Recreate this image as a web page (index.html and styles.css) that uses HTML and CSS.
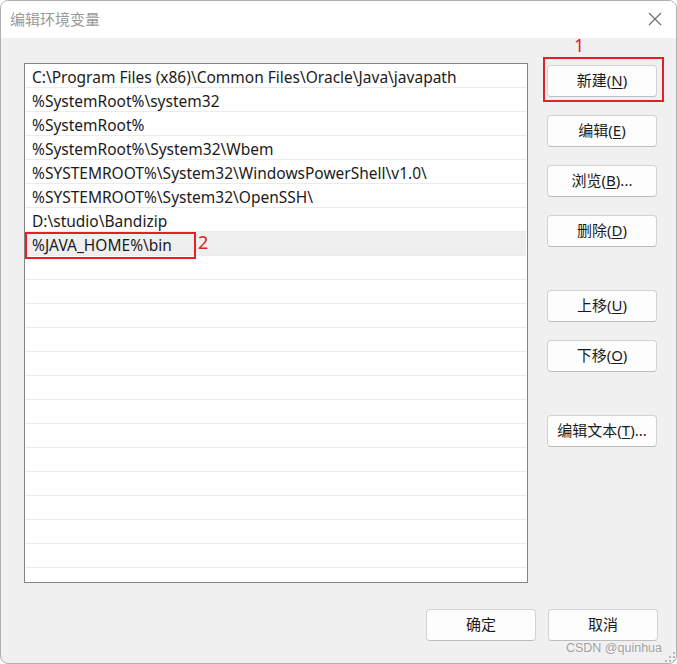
FILE: index.html
```html
<!DOCTYPE html>
<html lang="zh-CN">
<head>
<meta charset="utf-8">
<title>编辑环境变量</title>
<link rel="stylesheet" href="styles.css">
</head>
<body>
<div class="window">
  <div class="titlebar">
    <span class="title">编辑环境变量</span>
    <svg class="close" width="14" height="14" viewBox="0 0 14 14"><path d="M1 1 L13 13 M13 1 L1 13" stroke="#6a6a6a" stroke-width="1.1" fill="none"/></svg>
  </div>
  <div class="content">
    <div class="main">
      <div class="list">
        <div class="row">C:\Program Files (x86)\Common Files\Oracle\Java\javapath</div>
        <div class="row">%SystemRoot%\system32</div>
        <div class="row">%SystemRoot%</div>
        <div class="row">%SystemRoot%\System32\Wbem</div>
        <div class="row">%SYSTEMROOT%\System32\WindowsPowerShell\v1.0\</div>
        <div class="row">%SYSTEMROOT%\System32\OpenSSH\</div>
        <div class="row">D:\studio\Bandizip</div>
        <div class="row selected">%JAVA_HOME%\bin<span class="mark mark-row"></span><span class="num num-row">2</span></div>
        <div class="row"></div>
        <div class="row"></div>
        <div class="row"></div>
        <div class="row"></div>
        <div class="row"></div>
        <div class="row"></div>
        <div class="row"></div>
        <div class="row"></div>
        <div class="row"></div>
        <div class="row"></div>
        <div class="row"></div>
        <div class="row"></div>
        <div class="row"></div>
        <div class="row last"></div>
      </div>
      <div class="side">
        <div class="group">
          <div class="btn-wrap">
            <button class="btn">新建(<u>N</u>)</button>
            <span class="mark mark-btn"></span>
            <span class="num num-btn">1</span>
          </div>
          <button class="btn">编辑(<u>E</u>)</button>
          <button class="btn">浏览(<u>B</u>)...</button>
          <button class="btn">删除(<u>D</u>)</button>
        </div>
        <div class="group">
          <button class="btn">上移(<u>U</u>)</button>
          <button class="btn">下移(<u>O</u>)</button>
        </div>
        <div class="group">
          <button class="btn">编辑文本(<u>T</u>)...</button>
        </div>
      </div>
    </div>
    <div class="footer">
      <button class="btn">确定</button>
      <button class="btn">取消</button>
    </div>
  </div>
  <span class="watermark">CSDN @quinhua</span>
  <svg class="grip" width="10" height="10" viewBox="0 0 10 10">
    <rect x="8" y="0" width="2" height="2" fill="#b8b8b8"/>
    <rect x="4" y="4" width="2" height="2" fill="#b8b8b8"/>
    <rect x="8" y="4" width="2" height="2" fill="#b8b8b8"/>
    <rect x="0" y="8" width="2" height="2" fill="#b8b8b8"/>
    <rect x="4" y="8" width="2" height="2" fill="#b8b8b8"/>
    <rect x="8" y="8" width="2" height="2" fill="#b8b8b8"/>
  </svg>
</div>
</body>
</html>
```
FILE: styles.css
```css
* { box-sizing: border-box; }
html, body {
  margin: 0;
  padding: 0;
  background: #ffffff;
}
body {
  font-family: "Noto Sans", "Noto Sans CJK SC", sans-serif;
  font-size: 14px;
  color: #1b1b1b;
}
.window {
  position: relative;
  width: 677px;
  height: 664px;
  border: 1px solid #b0b0b0;
  border-radius: 8px;
  background: #f0f0f0;
  overflow: hidden;
  display: flex;
  flex-direction: column;
}
.titlebar {
  height: 37px;
  background: #ffffff;
  display: flex;
  align-items: center;
  justify-content: space-between;
  padding: 0 14px 2px 9px;
  flex-shrink: 0;
}
.title {
  font-family: "Noto Sans CJK SC", sans-serif;
  font-size: 15px;
  color: #999999;
  line-height: 1;
}
.close { display: block; }
.content {
  flex: 1;
  padding: 25px 18px 0 23px;
  display: flex;
  flex-direction: column;
}
.main {
  display: flex;
  gap: 19px;
  align-items: flex-start;
}
.list {
  width: 504px;
  height: 520px;
  border: 1px solid #838383;
  background: #ffffff;
  padding: 0 1px;
  overflow: hidden;
}
.row {
  position: relative;
  height: 24px;
  line-height: 26px;
  border-bottom: 1px solid #ebebeb;
  padding-left: 6px;
  white-space: nowrap;
  font-size: 15.5px;
  color: #1b1b1b;
}
.row.selected { background: #efefef; }
.row.last { border-bottom: none; }
.side {
  width: 110px;
  margin-top: 2px;
  display: flex;
  flex-direction: column;
  gap: 43px;
}
.group {
  display: flex;
  flex-direction: column;
  gap: 18px;
}
.btn-wrap { position: relative; }
.btn {
  width: 110px;
  height: 32px;
  background: #fdfdfd;
  border: 1px solid #d2d2d2;
  border-bottom-color: #bdbdbd;
  border-radius: 4px;
  font-family: "Noto Sans", "Noto Sans CJK SC", sans-serif;
  font-size: 15px;
  color: #1b1b1b;
  padding: 0 0 3px 0;
  display: flex;
  align-items: center;
  justify-content: center;
}
.btn u { text-underline-offset: 2px; }
.footer {
  display: flex;
  justify-content: flex-end;
  gap: 12px;
  margin-top: 26px;
}
.mark {
  position: absolute;
  border: 2px solid #e3202a;
  pointer-events: none;
}
.mark-row {
  left: -1px;
  top: 0;
  width: 171px;
  height: 27px;
}
.mark-btn {
  left: -4px;
  top: -8px;
  width: 121px;
  height: 45px;
}
.num {
  position: absolute;
  color: #e3202a;
  font-family: "Noto Sans", sans-serif;
  font-size: 18px;
  line-height: 1;
}
.num-row {
  left: 172px;
  top: 1px;
}
.num-btn {
  left: 27px;
  top: -29px;
}
.watermark {
  position: absolute;
  right: 14px;
  bottom: 8px;
  font-family: "Liberation Sans", sans-serif;
  font-size: 12.5px;
  color: #9f9f9f;
  text-shadow: 0 0 2px #ffffff;
}
.grip {
  position: absolute;
  right: 1px;
  bottom: 1px;
}
```
